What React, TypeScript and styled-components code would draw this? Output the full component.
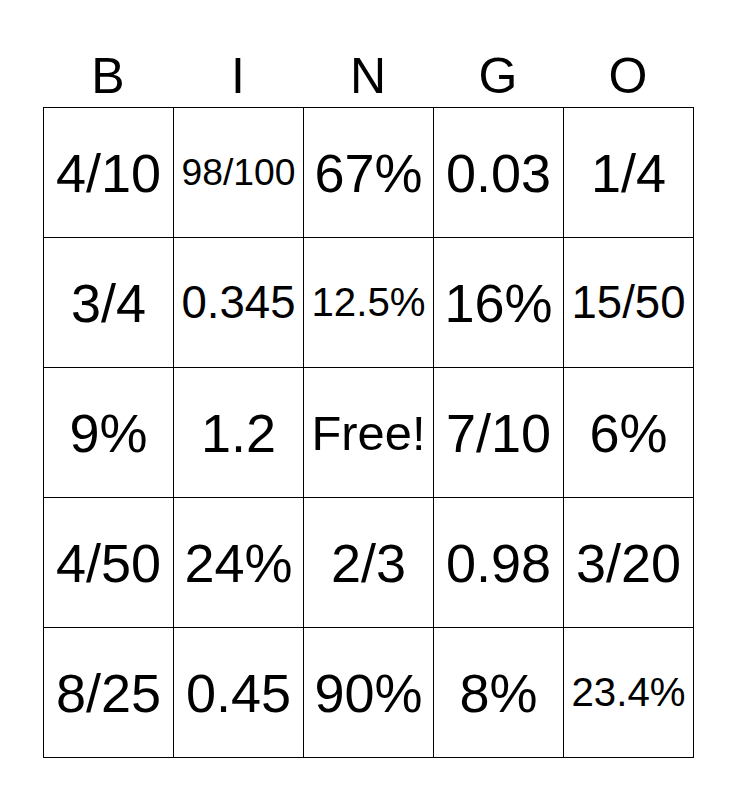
import styled, { createGlobalStyle } from 'styled-components';

const GlobalStyle = createGlobalStyle`
  html, body {
    margin: 0;
    padding: 0;
    background: #fff;
  }
  body {
    font-family: 'Liberation Sans', Arial, sans-serif;
    color: #000;
  }
`;

const Card = styled.div`
  width: 651px;
  margin-left: 43px;
  padding-top: 48px;
`;

const Header = styled.div`
  display: grid;
  grid-template-columns: repeat(5, 130px);
  height: 56px;
  margin-bottom: 3px;
`;

const Letter = styled.div`
  text-align: center;
  font-size: 50px;
  line-height: 56px;
`;

const Board = styled.div`
  display: grid;
  grid-template-columns: repeat(5, 129px);
  grid-auto-rows: 129px;
  gap: 1px;
  padding: 1px;
  background: #000;
`;

const Cell = styled.div<{ $size: number }>`
  display: flex;
  align-items: center;
  justify-content: center;
  background: #fff;
  font-size: ${(props) => props.$size}px;
  white-space: nowrap;
`;

// widest text gets shrunk to fit the cell, the rest stays at the max size
const MAX_SIZE = 54;
const FIT_WIDTH = 114;

const charWidth = (c: string): number => {
  switch (c) {
    case '/':
    case '.':
    case '!':
      return 0.278;
    case '%':
      return 0.889;
    case 'F':
      return 0.611;
    case 'r':
      return 0.333;
    default:
      return 0.556;
  }
};

const fitSize = (text: string): number => {
  const em = text.split('').reduce((sum, c) => sum + charWidth(c), 0);
  return Math.min(MAX_SIZE, FIT_WIDTH / em);
};

const letters = ['B', 'I', 'N', 'G', 'O'];

const cells = [
  '4/10', '98/100', '67%', '0.03', '1/4',
  '3/4', '0.345', '12.5%', '16%', '15/50',
  '9%', '1.2', 'Free!', '7/10', '6%',
  '4/50', '24%', '2/3', '0.98', '3/20',
  '8/25', '0.45', '90%', '8%', '23.4%',
];

const App = () => (
  <>
    <GlobalStyle />
    <Card>
      <Header>
        {letters.map((l) => (
          <Letter key={l}>{l}</Letter>
        ))}
      </Header>
      <Board>
        {cells.map((text, i) => (
          <Cell key={i} $size={fitSize(text)}>
            {text}
          </Cell>
        ))}
      </Board>
    </Card>
  </>
);

export default App;
